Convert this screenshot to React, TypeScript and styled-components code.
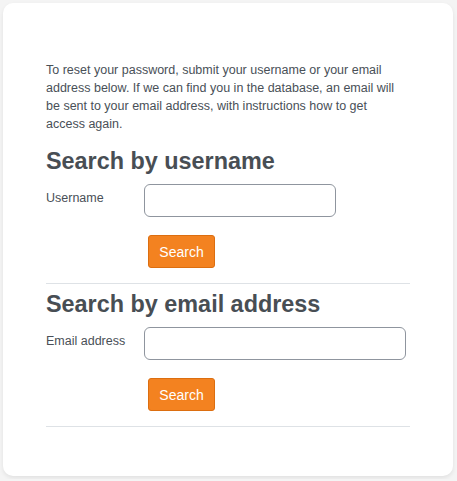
import React from 'react'
import styled, { createGlobalStyle } from 'styled-components'

const GlobalStyle = createGlobalStyle`
    body {
        margin: 0;
        background: #f4f4f4;
        font-family: 'Liberation Sans', Arial, sans-serif;
        color: #495057;
    }
`

const Card = styled.div`
    margin: 3px;
    width: 450px;
    height: 473px;
    box-sizing: border-box;
    background: #ffffff;
    border-radius: 10px;
    box-shadow: 0 2px 4px rgba(0, 0, 0, 0.08);
    padding: 58px 43px 0 43px;
`

const Intro = styled.p`
    margin: 0 0 15px 0;
    font-size: 12.5px;
    line-height: 18px;
    width: 356px;
`

const Section = styled.section`
    width: 364px;
`

const Heading = styled.h3`
    margin: 7px 0 9px 0;
    font-size: 23.4px;
    line-height: 27px;
    font-weight: bold;
    color: #484e54;
`

const Row = styled.div`
    display: flex;
    align-items: flex-start;
`

const Label = styled.label`
    width: 98px;
    flex-shrink: 0;
    padding-top: 5px;
    font-size: 12.5px;
    line-height: 18px;
`

const Input = styled.input<{ $width: number }>`
    width: ${({ $width }) => $width}px;
    height: 33px;
    box-sizing: border-box;
    border: 1px solid #8f959e;
    border-radius: 6px;
    background: #fff;
    font-size: 14px;
    padding: 0 8px;
`

const ButtonRow = styled.div`
    padding: 18px 0 15px 102px;
    border-bottom: 1px solid #dee2e6;
`

const Button = styled.button`
    width: 67px;
    height: 33px;
    box-sizing: border-box;
    background: #f38220;
    border: 1px solid #dc6e10;
    border-radius: 3px;
    color: #ffffff;
    font-family: 'Liberation Sans', Arial, sans-serif;
    font-size: 14px;
    padding: 0;
`

export default function App() {
    return (
        <>
            <GlobalStyle />
            <Card>
                <Intro>
                    To reset your password, submit your username or your email
                    address below. If we can find you in the database, an email
                    will be sent to your email address, with instructions how to
                    get access again.
                </Intro>
                <Section>
                    <Heading>Search by username</Heading>
                    <Row>
                        <Label>Username</Label>
                        <Input $width={192} type="text" />
                    </Row>
                    <ButtonRow>
                        <Button>Search</Button>
                    </ButtonRow>
                </Section>
                <Section>
                    <Heading>Search by email address</Heading>
                    <Row>
                        <Label>Email address</Label>
                        <Input $width={262} type="text" />
                    </Row>
                    <ButtonRow>
                        <Button>Search</Button>
                    </ButtonRow>
                </Section>
            </Card>
        </>
    )
}
